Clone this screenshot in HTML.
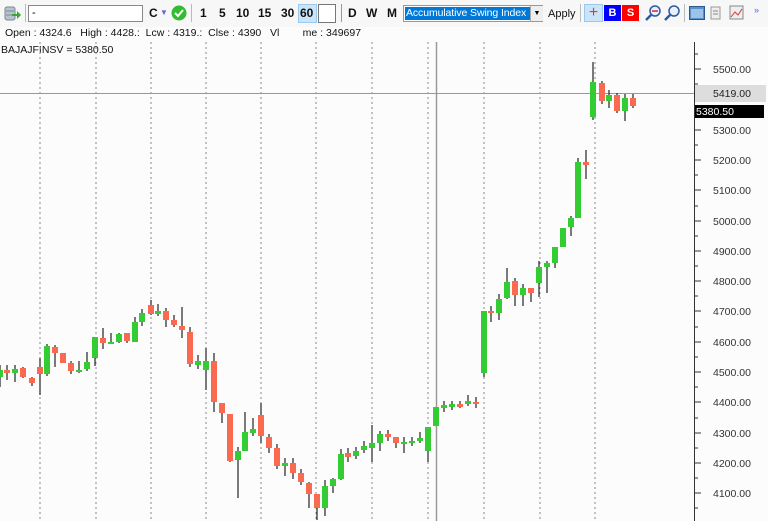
<!DOCTYPE html>
<html><head><meta charset="utf-8"><style>
body{margin:0;width:768px;height:521px;overflow:hidden;background:#fcfcfc;font-family:"Liberation Sans",sans-serif;position:relative}
.a{position:absolute}
.tb{font-size:12px;font-weight:bold;color:#111;top:6px}
.sep{position:absolute;top:4px;width:1px;height:18px;background:#bbb}
</style></head><body>
<div class="a" style="left:0;top:0;width:768px;height:27px;background:#f7f7f7"></div>
<svg class="a" style="left:4px;top:6px" width="18" height="16"><rect x="1" y="1" width="10" height="13" rx="2" fill="#b8c4cc" stroke="#7a8a96"/><line x1="2" y1="5" x2="10" y2="5" stroke="#7a8a96"/><line x1="2" y1="9" x2="10" y2="9" stroke="#7a8a96"/><path d="M8 8h5v-3l4 4-4 4v-3h-5z" fill="#3a3"/></svg>
<div class="sep" style="left:25px"></div>
<div class="a" style="left:28px;top:5px;width:115px;height:17px;border:1px solid #888;background:#fff;font-size:11px;line-height:15px;padding-left:3px;box-sizing:border-box">-</div>
<div class="a tb" style="left:149px">C</div>
<div class="a" style="left:160px;top:8px;font-size:8px;color:#66c">▼</div>
<svg class="a" style="left:171px;top:5px" width="16" height="16"><circle cx="8" cy="8" r="7.5" fill="#3b3"/><path d="M4 8l3 3 5-6" stroke="#fff" stroke-width="2" fill="none"/></svg>
<div class="sep" style="left:191px"></div>
<div class="a tb" style="left:200px">1</div>
<div class="a tb" style="left:219px">5</div>
<div class="a tb" style="left:236px">10</div>
<div class="a tb" style="left:258px">15</div>
<div class="a tb" style="left:281px">30</div>
<div class="a" style="left:298px;top:4px;width:19px;height:19px;background:#cce4f7;border:1px solid #99c9ef;box-sizing:border-box"></div>
<div class="a tb" style="left:300px">60</div>
<div class="a" style="left:318px;top:4px;width:18px;height:19px;background:#fff;border:1px solid #777;box-sizing:border-box"></div>
<div class="sep" style="left:341px;background:#999"></div>
<div class="a tb" style="left:348px">D</div>
<div class="a tb" style="left:366px">W</div>
<div class="a tb" style="left:387px">M</div>
<div class="a" style="left:403px;top:5px;width:140px;height:17px;border:1px solid #999;background:#fff;box-sizing:border-box"></div>
<div class="a" style="left:405px;top:7px;width:124px;height:13px;background:#0078d7;color:#fff;font-size:10.5px;line-height:13px;padding-left:1px;white-space:nowrap;overflow:hidden;letter-spacing:-0.1px">Accumulative Swing Index</div>
<div class="a" style="left:530px;top:6px;width:12px;height:15px;background:#eee;border-left:1px solid #aaa;font-size:7px;text-align:center;line-height:15px">▼</div>
<div class="a" style="left:548px;top:8px;font-size:11px;color:#111">Apply</div>
<div class="sep" style="left:580px"></div>
<div class="a" style="left:584px;top:4px;width:19px;height:18px;background:#cce4f7;border:1px solid #99c9ef;box-sizing:border-box;color:#e33;font-size:16px;line-height:15px;text-align:center">+</div>
<div class="a" style="left:604px;top:5px;width:17px;height:16px;background:#00f;color:#fff;font-weight:bold;font-size:11px;line-height:16px;text-align:center">B</div>
<div class="a" style="left:622px;top:5px;width:17px;height:16px;background:#f00;color:#fff;font-weight:bold;font-size:11px;line-height:16px;text-align:center">S</div>
<svg class="a" style="left:644px;top:4px" width="18" height="18"><circle cx="11" cy="7" r="5" fill="#e8f0ff" stroke="#2a5aa0" stroke-width="1.5"/><line x1="7" y1="11" x2="2" y2="16" stroke="#2a5aa0" stroke-width="2.5"/><line x1="8" y1="7" x2="14" y2="7" stroke="#d22" stroke-width="1.5"/></svg>
<svg class="a" style="left:663px;top:4px" width="18" height="18"><circle cx="11" cy="7" r="5" fill="#e8f0ff" stroke="#2a5aa0" stroke-width="1.5"/><line x1="7" y1="11" x2="2" y2="16" stroke="#2a5aa0" stroke-width="2.5"/></svg>
<div class="sep" style="left:684px"></div>
<svg class="a" style="left:689px;top:6px" width="16" height="14"><rect x="0.5" y="0.5" width="15" height="13" fill="#5a8fc8" stroke="#2a5a90"/><rect x="2" y="3" width="12" height="9" fill="#9cc4ea"/></svg>
<svg class="a" style="left:710px;top:6px" width="14" height="14"><rect x="1" y="1" width="9" height="12" fill="#eee" stroke="#999"/><line x1="3" y1="5" x2="8" y2="5" stroke="#888"/><line x1="3" y1="8" x2="8" y2="8" stroke="#888"/></svg>
<svg class="a" style="left:729px;top:5px" width="15" height="15"><rect x="1" y="1" width="13" height="13" fill="#eee" stroke="#888"/><path d="M2 12l4-5 3 3 4-6" stroke="#d33" fill="none"/></svg>
<div class="a" style="left:754px;top:5px;font-size:9px;color:#56c">»</div>
<div class="a" style="left:5px;top:27px;font-size:10.5px;color:#111;white-space:pre">Open : 4324.6   High : 4428.:  Lcw : 4319.:  Clse : 4390   Vl        me : 349697</div>
<div class="a" style="left:1px;top:44px;font-size:10.5px;color:#111">BAJAJFINSV = 5380.50</div>
<svg class="a" style="left:0;top:0" width="768" height="521">
<g stroke="#888" stroke-dasharray="2,3" stroke-width="1">
<line x1="40" y1="42" x2="40" y2="521"/><line x1="96" y1="42" x2="96" y2="521"/><line x1="151" y1="42" x2="151" y2="521"/><line x1="206" y1="42" x2="206" y2="521"/><line x1="261" y1="42" x2="261" y2="521"/><line x1="316" y1="42" x2="316" y2="521"/><line x1="372" y1="42" x2="372" y2="521"/><line x1="428" y1="42" x2="428" y2="521"/><line x1="484" y1="42" x2="484" y2="521"/><line x1="540" y1="42" x2="540" y2="521"/><line x1="595" y1="42" x2="595" y2="521"/>
</g>
<line x1="436.5" y1="42" x2="436.5" y2="521" stroke="#999" stroke-width="1.5"/>
<line x1="0" y1="93.5" x2="694" y2="93.5" stroke="#999"/>
<line x1="694.5" y1="42" x2="694.5" y2="521" stroke="#333"/>
<g stroke="#333" stroke-width="1.3">
<line x1="0" y1="365" x2="0" y2="387"/><line x1="7" y1="365" x2="7" y2="380"/><line x1="15" y1="365" x2="15" y2="382"/><line x1="23" y1="367" x2="23" y2="378"/><line x1="32" y1="377" x2="32" y2="386"/><line x1="40" y1="358" x2="40" y2="395"/><line x1="47" y1="344" x2="47" y2="376"/><line x1="55" y1="345" x2="55" y2="367"/><line x1="71" y1="361" x2="71" y2="374"/><line x1="79" y1="361" x2="79" y2="373"/><line x1="87" y1="352" x2="87" y2="371"/><line x1="95" y1="337" x2="95" y2="366"/><line x1="103" y1="328" x2="103" y2="349"/><line x1="111" y1="333" x2="111" y2="344"/><line x1="119" y1="333" x2="119" y2="343"/><line x1="127" y1="333" x2="127" y2="343"/><line x1="135" y1="317" x2="135" y2="342"/><line x1="142" y1="309" x2="142" y2="326"/><line x1="151" y1="300" x2="151" y2="315"/><line x1="158" y1="304" x2="158" y2="316"/><line x1="166" y1="308" x2="166" y2="327"/><line x1="174" y1="315" x2="174" y2="327"/><line x1="182" y1="307" x2="182" y2="338"/><line x1="190" y1="327" x2="190" y2="367"/><line x1="198" y1="355" x2="198" y2="369"/><line x1="206" y1="348" x2="206" y2="390"/><line x1="214" y1="353" x2="214" y2="412"/><line x1="222" y1="403" x2="222" y2="423"/><line x1="230" y1="414" x2="230" y2="462"/><line x1="238" y1="447" x2="238" y2="498"/><line x1="245" y1="412" x2="245" y2="451"/><line x1="253" y1="418" x2="253" y2="436"/><line x1="261" y1="403" x2="261" y2="443"/><line x1="269" y1="434" x2="269" y2="453"/><line x1="277" y1="444" x2="277" y2="469"/><line x1="285" y1="458" x2="285" y2="476"/><line x1="293" y1="458" x2="293" y2="479"/><line x1="301" y1="469" x2="301" y2="485"/><line x1="309" y1="482" x2="309" y2="508"/><line x1="317" y1="494" x2="317" y2="520"/><line x1="325" y1="480" x2="325" y2="516"/><line x1="333" y1="478" x2="333" y2="493"/><line x1="341" y1="449" x2="341" y2="480"/><line x1="348" y1="448" x2="348" y2="462"/><line x1="356" y1="447" x2="356" y2="459"/><line x1="364" y1="441" x2="364" y2="453"/><line x1="372" y1="425" x2="372" y2="462"/><line x1="380" y1="431" x2="380" y2="451"/><line x1="388" y1="430" x2="388" y2="441"/><line x1="396" y1="437" x2="396" y2="448"/><line x1="404" y1="437" x2="404" y2="453"/><line x1="412" y1="437" x2="412" y2="446"/><line x1="420" y1="432" x2="420" y2="443"/><line x1="428" y1="427" x2="428" y2="462"/><line x1="444" y1="401" x2="444" y2="412"/><line x1="452" y1="401" x2="452" y2="410"/><line x1="460" y1="401" x2="460" y2="408"/><line x1="468" y1="395" x2="468" y2="406"/><line x1="476" y1="397" x2="476" y2="408"/><line x1="484" y1="311" x2="484" y2="377"/><line x1="491" y1="306" x2="491" y2="322"/><line x1="499" y1="294" x2="499" y2="320"/><line x1="507" y1="268" x2="507" y2="299"/><line x1="515" y1="278" x2="515" y2="306"/><line x1="523" y1="284" x2="523" y2="306"/><line x1="531" y1="288" x2="531" y2="302"/><line x1="539" y1="261" x2="539" y2="297"/><line x1="547" y1="261" x2="547" y2="293"/><line x1="555" y1="247" x2="555" y2="268"/><line x1="563" y1="228" x2="563" y2="247"/><line x1="571" y1="216" x2="571" y2="236"/><line x1="578" y1="158" x2="578" y2="218"/><line x1="586" y1="150" x2="586" y2="179"/><line x1="593" y1="62" x2="593" y2="120"/><line x1="602" y1="81" x2="602" y2="104"/><line x1="609" y1="90" x2="609" y2="108"/><line x1="617" y1="93" x2="617" y2="113"/><line x1="625" y1="94" x2="625" y2="121"/><line x1="633" y1="94" x2="633" y2="108"/>
</g>
<g fill="#33cc33">
<rect x="-3" y="370" width="6" height="7"/><rect x="12" y="369" width="6" height="4"/><rect x="44" y="346" width="6" height="28"/><rect x="76" y="370" width="6" height="2"/><rect x="84" y="362" width="6" height="7"/><rect x="92" y="337" width="6" height="21"/><rect x="108" y="342" width="6" height="2"/><rect x="116" y="334" width="6" height="8"/><rect x="132" y="322" width="6" height="20"/><rect x="139" y="313" width="6" height="9"/><rect x="155" y="311" width="6" height="3"/><rect x="195" y="361" width="6" height="4"/><rect x="203" y="361" width="6" height="9"/><rect x="235" y="451" width="6" height="9"/><rect x="242" y="432" width="6" height="19"/><rect x="250" y="429" width="6" height="4"/><rect x="282" y="463" width="6" height="3"/><rect x="322" y="486" width="6" height="22"/><rect x="330" y="479" width="6" height="7"/><rect x="338" y="454" width="6" height="25"/><rect x="353" y="451" width="6" height="5"/><rect x="361" y="446" width="6" height="4"/><rect x="369" y="443" width="6" height="5"/><rect x="377" y="434" width="6" height="9"/><rect x="401" y="442" width="6" height="2"/><rect x="409" y="441" width="6" height="2"/><rect x="417" y="438" width="6" height="3"/><rect x="425" y="427" width="6" height="24"/><rect x="433" y="407" width="6" height="19"/><rect x="441" y="405" width="6" height="3"/><rect x="449" y="404" width="6" height="3"/><rect x="465" y="401" width="6" height="3"/><rect x="481" y="311" width="6" height="62"/><rect x="496" y="299" width="6" height="14"/><rect x="504" y="282" width="6" height="16"/><rect x="520" y="288" width="6" height="7"/><rect x="536" y="267" width="6" height="16"/><rect x="544" y="263" width="6" height="4"/><rect x="552" y="247" width="6" height="16"/><rect x="560" y="228" width="6" height="19"/><rect x="568" y="218" width="6" height="9"/><rect x="575" y="162" width="6" height="56"/><rect x="590" y="82" width="6" height="35"/><rect x="606" y="95" width="6" height="6"/><rect x="622" y="98" width="6" height="13"/>
</g>
<g fill="#fa6a50">
<rect x="4" y="370" width="6" height="3"/><rect x="20" y="368" width="6" height="9"/><rect x="29" y="378" width="6" height="5"/><rect x="37" y="367" width="6" height="7"/><rect x="52" y="347" width="6" height="6"/><rect x="60" y="353" width="6" height="10"/><rect x="68" y="363" width="6" height="8"/><rect x="100" y="338" width="6" height="5"/><rect x="124" y="333" width="6" height="8"/><rect x="148" y="305" width="6" height="9"/><rect x="163" y="311" width="6" height="9"/><rect x="171" y="320" width="6" height="5"/><rect x="179" y="326" width="6" height="4"/><rect x="187" y="332" width="6" height="32"/><rect x="211" y="361" width="6" height="41"/><rect x="219" y="403" width="6" height="10"/><rect x="227" y="414" width="6" height="47"/><rect x="258" y="415" width="6" height="21"/><rect x="266" y="437" width="6" height="11"/><rect x="274" y="448" width="6" height="18"/><rect x="290" y="463" width="6" height="10"/><rect x="298" y="473" width="6" height="9"/><rect x="306" y="483" width="6" height="11"/><rect x="314" y="494" width="6" height="14"/><rect x="345" y="453" width="6" height="4"/><rect x="385" y="434" width="6" height="3"/><rect x="393" y="437" width="6" height="6"/><rect x="457" y="404" width="6" height="3"/><rect x="473" y="402" width="6" height="2"/><rect x="488" y="311" width="6" height="2"/><rect x="512" y="281" width="6" height="14"/><rect x="528" y="288" width="6" height="5"/><rect x="583" y="162" width="6" height="3"/><rect x="599" y="83" width="6" height="18"/><rect x="614" y="95" width="6" height="16"/><rect x="630" y="98" width="6" height="8"/>
</g>
<g stroke="#333">
<line x1="695" y1="69" x2="701" y2="69"/><line x1="695" y1="99" x2="701" y2="99"/><line x1="695" y1="130" x2="701" y2="130"/><line x1="695" y1="160" x2="701" y2="160"/><line x1="695" y1="190" x2="701" y2="190"/><line x1="695" y1="221" x2="701" y2="221"/><line x1="695" y1="251" x2="701" y2="251"/><line x1="695" y1="281" x2="701" y2="281"/><line x1="695" y1="311" x2="701" y2="311"/><line x1="695" y1="342" x2="701" y2="342"/><line x1="695" y1="372" x2="701" y2="372"/><line x1="695" y1="402" x2="701" y2="402"/><line x1="695" y1="433" x2="701" y2="433"/><line x1="695" y1="463" x2="701" y2="463"/><line x1="695" y1="493" x2="701" y2="493"/>
<line x1="695" y1="54" x2="698" y2="54"/><line x1="695" y1="84" x2="698" y2="84"/><line x1="695" y1="145" x2="698" y2="145"/><line x1="695" y1="175" x2="698" y2="175"/><line x1="695" y1="206" x2="698" y2="206"/><line x1="695" y1="236" x2="698" y2="236"/><line x1="695" y1="266" x2="698" y2="266"/><line x1="695" y1="296" x2="698" y2="296"/><line x1="695" y1="327" x2="698" y2="327"/><line x1="695" y1="357" x2="698" y2="357"/><line x1="695" y1="387" x2="698" y2="387"/><line x1="695" y1="418" x2="698" y2="418"/><line x1="695" y1="448" x2="698" y2="448"/><line x1="695" y1="478" x2="698" y2="478"/><line x1="695" y1="508" x2="698" y2="508"/>
</g>
<g font-family="Liberation Sans,sans-serif" font-size="10.5" fill="#333">
<text x="713" y="73">5500.00</text><text x="713" y="134">5300.00</text><text x="713" y="164">5200.00</text><text x="713" y="194">5100.00</text><text x="713" y="225">5000.00</text><text x="713" y="255">4900.00</text><text x="713" y="285">4800.00</text><text x="713" y="315">4700.00</text><text x="713" y="346">4600.00</text><text x="713" y="376">4500.00</text><text x="713" y="406">4400.00</text><text x="713" y="437">4300.00</text><text x="713" y="467">4200.00</text><text x="713" y="497">4100.00</text>
</g>
<rect x="695" y="85" width="71" height="17" fill="#ddd"/>
<text x="713" y="97" font-family="Liberation Sans,sans-serif" font-size="10.5" fill="#222">5419.00</text>
<rect x="695" y="105" width="69" height="13" fill="#000"/>
<text x="696" y="115" font-family="Liberation Sans,sans-serif" font-size="10.5" fill="#fff">5380.50</text>
</svg>
</body></html>
